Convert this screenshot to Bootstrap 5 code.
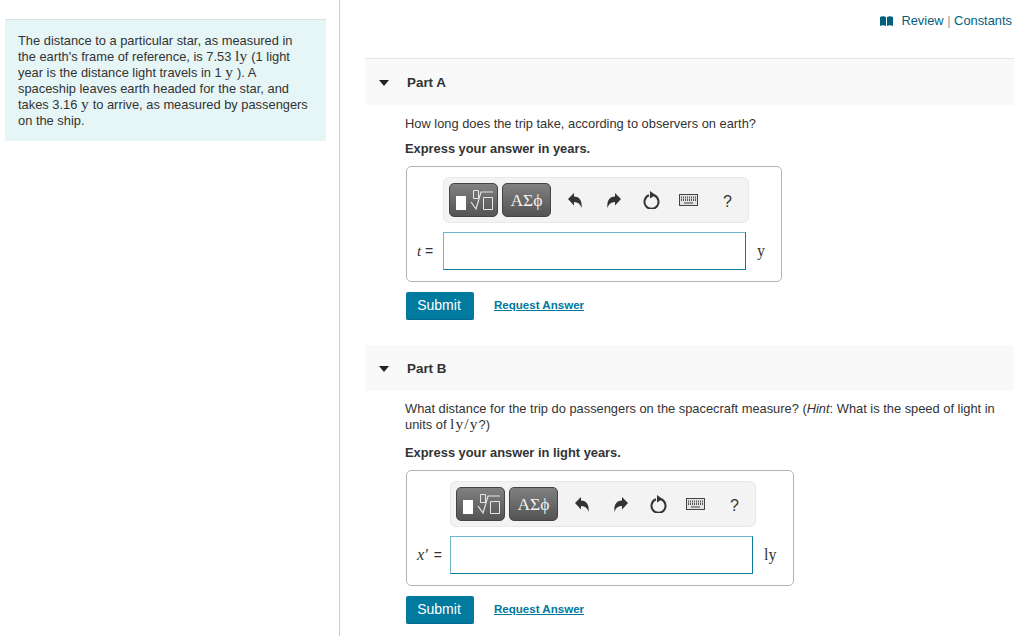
<!DOCTYPE html>
<html lang="en">
<head>
<meta charset="utf-8">
<title>Part A and B</title>
<link rel="stylesheet" href="https://cdn.jsdelivr.net/npm/bootstrap@5.3.0/dist/css/bootstrap.min.css">
<style>
html,body{height:636px;overflow:hidden}
body{font-family:"Liberation Sans",Arial,sans-serif;font-size:12.87px;line-height:16px;color:#333;background:#fff}
.m{font-family:"Liberation Serif",serif;font-size:15.5px;line-height:0;letter-spacing:.4px}
.mw{letter-spacing:1.1px}
.shell{height:636px}
.lefty{width:340px;flex:none;border-right:1px solid #ccc;padding:19px 13px 0 5px}
.infobox{width:321px;height:122px;background:#e6f5f6;border-top:1px solid #d8e2e4;padding:13px 13px 0 13px}
.righty{width:649px;flex:none;margin-left:25px}
.toplinks{height:58px;padding:13px 2px 0 0;color:#999}
.toplinks a{color:#00607e;text-decoration:none}
.toplinks svg{margin-right:8px;vertical-align:-1px}
.parthead{height:47px;background:#f9f9f9;border-top:1px solid #e4e4e4;padding:2px 0 0 14px;font-weight:700;font-size:13.4px;color:#333}
.partheadb{height:46px;border-top:0;margin-top:25px}
.tri{width:0;height:0;border-left:5.5px solid transparent;border-right:5.5px solid transparent;border-top:6px solid #222;margin-right:18px}
.partbody{padding-left:40px}
.q1{margin:11px 0 0 0}
.q2{margin:10px 0 0 0;width:600px}
.expr{font-weight:700;margin:9px 0 9px}
.expr2{margin:12px 0 9px}
.ansbox{border:1px solid #b5b5b5;border-radius:5px;height:116px;padding:10px 0 0 36px;margin-left:1px}
.boxa{width:376px}
.boxb{width:388px;padding-left:43px}
.tools{width:306px;height:46px;background:#f3f3f3;border:1px solid #e8e8e8;border-radius:6px;padding:5px 0 0 5px}
.tbtn{height:34px;width:49px;border-radius:5px;border:1px solid #444;background:linear-gradient(#808080,#545454);color:#f2f2f2;padding:0}
.tbtn svg{display:block;margin:-1px}
.tbtn1{margin-right:4px}
.tbtn2{font-family:"Liberation Serif",serif;font-size:17.5px;line-height:30px}
.icos{margin-left:17px;height:34px}
.sl1{width:39px}
.sl2{width:36px}
.sl3{width:44px}
.helpq{font-size:16px;font-family:"Liberation Sans",sans-serif;width:10px;margin-top:3px}
.icos svg{display:block}
.ansrow{margin-top:9px;margin-left:-26px;height:38px}
.lbl{width:26px;color:#333;font-size:14px;white-space:nowrap}
.lbl i{font-family:"Liberation Serif",serif;font-size:15px}
.lblb{width:33px;margin-left:-7px}
.lblb i{font-size:16.5px;margin-right:2px}
.inp{width:303px;height:38px;border:1px solid #0b7a9e;border-left-color:#6fb4c9;border-top-color:#6fb4c9;border-radius:0;padding:0;background:#fff}
.unit{margin-left:11px;font-family:"Liberation Serif",serif;font-size:16px}
.actions{margin-top:10px;margin-left:1px}
.subbtn{width:68px;height:28px;background:#007a9e;border:0;border-bottom:1px solid #006a8a;color:#fff;font-size:14px;line-height:26px;padding:0 2px 2px 0;border-radius:2px}
.subbtn:hover{background:#007a9e;color:#fff}
.reqlink{color:#00789c;font-weight:700;font-size:11.55px;margin:-2px 0 0 20px;text-decoration:underline}
</style>
</head>
<body>
<div class="d-flex shell">
  <div class="lefty">
    <div class="infobox">The distance to a particular star, as measured in the earth's frame of reference, is 7.53 <span class="m">ly</span> (1 light year is the distance light travels in 1 <span class="m">y</span> ). A spaceship leaves earth headed for the star, and takes 3.16 <span class="m">y</span> to arrive, as measured by passengers on the ship.</div>
  </div>
  <div class="righty">
    <div class="toplinks text-end">
      <svg width="13" height="10" viewBox="0 0 13 10"><path fill="#00607e" d="M0 1c2-1 4-1 6 0v9c-2-1-4-1-6 0zM7 1c2-1 4-1 6 0v9c-2-1-4-1-6 0z"/></svg><a href="#">Review</a> | <a href="#">Constants</a>
    </div>

    <div class="parthead d-flex align-items-center"><span class="tri"></span>Part A</div>
    <div class="partbody">
      <p class="q1">How long does the trip take, according to observers on earth?</p>
      <p class="expr">Express your answer in years.</p>
      <div class="ansbox boxa">
        <div class="tools d-flex">
          <button class="btn tbtn tbtn1" aria-label="Templates"><svg width="49" height="34" viewBox="0 0 49 34"><path fill="#fff" d="M7 13h10v14H7z"/><path fill="none" stroke="#e6e6e6" d="M24.500 7.500h5v8h-5zM34.500 14.500h9v12h-9z"/><path fill="none" stroke="#e6e6e6" stroke-width="1.200" d="M22 19l5 7 5-17h12"/></svg></button>
          <button class="btn tbtn tbtn2">ΑΣϕ</button>
          <div class="icos d-flex align-items-center">
            <div class="sl1"><svg width="14" height="15" viewBox="0 0 14 15"><path fill="#333" d="M0 6 6 0v3.500C11 3.500 14.500 7 13.500 15 12.500 11 10 9 6 9v3.500z"/></svg></div>
            <div class="sl2"><svg width="14" height="15" viewBox="0 0 14 15"><path fill="#333" d="M14 6 8 0v3.500C3 3.500-.5 7 .5 15 1.500 11 4 9 8 9v3.500z"/></svg></div>
            <div class="sl2"><svg width="17" height="18" viewBox="0 0 17 18"><path fill="none" stroke="#333" stroke-width="2" d="M11 4.300a7 7 0 1 1-5 0"/><path fill="#333" d="M7 0l5.500 4L7 7.500z"/></svg></div>
            <div class="sl3"><svg width="19" height="12" viewBox="0 0 19 12"><rect x=".5" y=".5" width="18" height="11" fill="#e4e4e4" stroke="#444"/><path stroke="#555" stroke-width="2" stroke-dasharray="1 1" d="M2 3.500h15M2 6h15"/><path stroke="#444" d="M5 9h9"/></svg></div>
            <div class="helpq">?</div>
          </div>
        </div>
        <div class="ansrow d-flex align-items-center">
          <div class="lbl"><i>t</i> =</div>
          <input class="inp" type="text" aria-label="t">
          <span class="unit">y</span>
        </div>
      </div>
      <div class="actions d-flex align-items-center">
        <button class="btn subbtn">Submit</button>
        <a class="reqlink" href="#">Request Answer</a>
      </div>
    </div>

    <div class="parthead partheadb d-flex align-items-center"><span class="tri"></span>Part B</div>
    <div class="partbody">
      <p class="q2">What distance for the trip do passengers on the spacecraft measure? (<i>Hint</i>: What is the speed of light in units of <span class="m mw">ly/y</span>?)</p>
      <p class="expr expr2">Express your answer in light years.</p>
      <div class="ansbox boxb">
        <div class="tools d-flex">
          <button class="btn tbtn tbtn1" aria-label="Templates"><svg width="49" height="34" viewBox="0 0 49 34"><path fill="#fff" d="M7 13h10v14H7z"/><path fill="none" stroke="#e6e6e6" d="M24.500 7.500h5v8h-5zM34.500 14.500h9v12h-9z"/><path fill="none" stroke="#e6e6e6" stroke-width="1.200" d="M22 19l5 7 5-17h12"/></svg></button>
          <button class="btn tbtn tbtn2">ΑΣϕ</button>
          <div class="icos d-flex align-items-center">
            <div class="sl1"><svg width="14" height="15" viewBox="0 0 14 15"><path fill="#333" d="M0 6 6 0v3.500C11 3.500 14.500 7 13.500 15 12.500 11 10 9 6 9v3.500z"/></svg></div>
            <div class="sl2"><svg width="14" height="15" viewBox="0 0 14 15"><path fill="#333" d="M14 6 8 0v3.500C3 3.500-.5 7 .5 15 1.500 11 4 9 8 9v3.500z"/></svg></div>
            <div class="sl2"><svg width="17" height="18" viewBox="0 0 17 18"><path fill="none" stroke="#333" stroke-width="2" d="M11 4.300a7 7 0 1 1-5 0"/><path fill="#333" d="M7 0l5.500 4L7 7.500z"/></svg></div>
            <div class="sl3"><svg width="19" height="12" viewBox="0 0 19 12"><rect x=".5" y=".5" width="18" height="11" fill="#e4e4e4" stroke="#444"/><path stroke="#555" stroke-width="2" stroke-dasharray="1 1" d="M2 3.500h15M2 6h15"/><path stroke="#444" d="M5 9h9"/></svg></div>
            <div class="helpq">?</div>
          </div>
        </div>
        <div class="ansrow d-flex align-items-center">
          <div class="lbl lblb"><i>x′</i> =</div>
          <input class="inp" type="text" aria-label="x prime">
          <span class="unit">ly</span>
        </div>
      </div>
      <div class="actions d-flex align-items-center">
        <button class="btn subbtn">Submit</button>
        <a class="reqlink" href="#">Request Answer</a>
      </div>
    </div>
  </div>
</div>
</body>
</html>
